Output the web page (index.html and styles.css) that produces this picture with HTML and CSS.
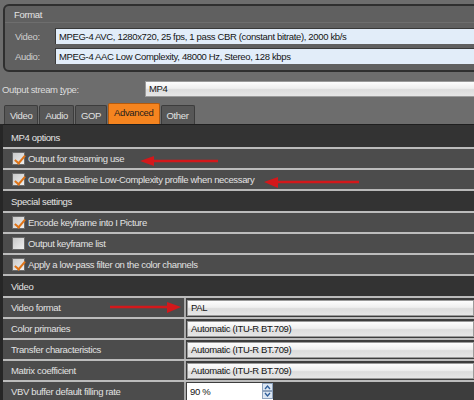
FILE: index.html
```html
<!DOCTYPE html>
<html lang="en">
<head>
    <meta charset="UTF-8">
    <title>MP4 output settings</title>
    <link rel="stylesheet" href="styles.css">
</head>
<body>
    <div class="format-box">
        <div class="box-title">Format</div>
        <div class="box-body">
            <div class="field-row">
                <span class="field-label">Video:</span>
                <div class="field info">MPEG-4 AVC, 1280x720, 25 fps, 1 pass CBR (constant bitrate), 2000 kb/s</div>
            </div>
            <div class="field-row">
                <span class="field-label">Audio:</span>
                <div class="field info">MPEG-4 AAC Low Complexity, 48000 Hz, Stereo, 128 kbps</div>
            </div>
        </div>
    </div>

    <div class="stream-row">
        <span class="stream-label">Output stream <u>t</u>ype:</span>
        <div class="field combo">MP4</div>
    </div>

    <div class="tabs">
        <div class="tab">Video</div>
        <div class="tab">Audio</div>
        <div class="tab">GOP</div>
        <div class="tab active">Advanced</div>
        <div class="tab">Other</div>
    </div>

    <div class="panel">
        <div class="sect first">MP4 options</div>
        <div class="row"><span class="check on"></span>Output for streaming use</div>
        <div class="row"><span class="check on"></span>Output a Baseline Low-Complexity profile when necessary</div>

        <div class="sect">Special settings</div>
        <div class="row"><span class="check on"></span>Encode keyframe into I Picture</div>
        <div class="row"><span class="check"></span>Output keyframe list</div>
        <div class="row"><span class="check on"></span>Apply a low-pass filter on the color channels</div>

        <div class="sect">Video</div>
        <div class="row split">
            <span class="prop">Video format</span>
            <div class="value"><div class="field combo">PAL</div></div>
        </div>
        <div class="row split">
            <span class="prop">Color primaries</span>
            <div class="value"><div class="field combo">Automatic (ITU-R BT.709)</div></div>
        </div>
        <div class="row split">
            <span class="prop">Transfer characteristics</span>
            <div class="value"><div class="field combo">Automatic (ITU-R BT.709)</div></div>
        </div>
        <div class="row split">
            <span class="prop">Matrix coefficient</span>
            <div class="value"><div class="field combo">Automatic (ITU-R BT.709)</div></div>
        </div>
        <div class="row split">
            <span class="prop">VBV buffer default filling rate</span>
            <div class="value">
                <div class="spin">
                    <span class="spin-text">90 %</span>
                    <span class="spin-btns">
                        <svg width="11" height="16" viewBox="0 0 11 16">
                            <rect x="0.5" y="0.5" width="10" height="7" fill="#dce6f2" stroke="#8da2bd"/>
                            <rect x="0.5" y="8.5" width="10" height="7" fill="#dce6f2" stroke="#8da2bd"/>
                            <path d="M3 6 L5.5 3 L8 6" fill="none" stroke="#2d5d9a" stroke-width="1.3"/>
                            <path d="M3 10 L5.5 13 L8 10" fill="none" stroke="#2d5d9a" stroke-width="1.3"/>
                        </svg>
                    </span>
                </div>
            </div>
        </div>
    </div>

    <!-- red annotation arrows drawn over the screenshot -->
    <svg class="arrows" width="474" height="400" viewBox="0 0 474 400">
        <g fill="#d3181b" stroke="#d3181b">
            <line x1="218" y1="161" x2="150" y2="161" stroke-width="2.5"/>
            <polygon points="140,161 154,156 154,166" stroke="none"/>
            <line x1="359" y1="182" x2="274" y2="182" stroke-width="2.5"/>
            <polygon points="264,182 278,177 278,188" stroke="none"/>
            <line x1="110" y1="307" x2="170" y2="307" stroke-width="2.5"/>
            <polygon points="181,307 167,302 167,313" stroke="none"/>
        </g>
    </svg>
</body>
</html>
```

FILE: styles.css
```css
body {
    margin: 0;
    width: 474px;
    height: 400px;
    overflow: hidden;
    position: relative;
    background-color: #6d6d6d;
    color: #dedede;
    font-family: "Liberation Sans", Arial, sans-serif;
    font-size: 9.5px;
    letter-spacing: -0.35px;
}

/* Format group box */
.format-box {
    margin: 4px -12px 0 3px;
    height: 64px;
    border: 2px solid #2f2f2f;
    border-radius: 6px;
    background-color: #606060;
}
.box-title {
    height: 16px;
    line-height: 18px;
    padding-left: 9px;
    border-bottom: 1px solid #6e6e6e;
    color: #e4e4e4;
}
.box-body {
    display: flex;
    flex-direction: column;
    gap: 4px;
    padding-top: 5px;
}
.field-row {
    display: flex;
    align-items: center;
}
.field-label {
    width: 40px;
    padding-left: 10px;
    color: #cfcfcf;
}
.field {
    flex: 1;
    height: 16px;
    line-height: 16px;
    padding-left: 3px;
    box-sizing: border-box;
    color: #141414;
    white-space: nowrap;
    overflow: hidden;
}
.field.info {
    background-color: #e2edf9;
    border-top: 1px solid #3a3a3a;
    border-left: 1px solid #3a3a3a;
}
.field.combo {
    background: linear-gradient(#fdfdfd, #efefef 45%, #dcdcdc 55%, #e6e6e6);
    border: 1px solid #9a9a9a;
    line-height: 14px;
}

/* Output stream type */
.stream-row {
    display: flex;
    align-items: center;
    margin-top: 9px;
}
.stream-label {
    width: 143px;
    padding-left: 2px;
    color: #dcdcdc;
}
.stream-row .field {
    margin-right: -10px;
}

/* tabs */
.tabs {
    display: flex;
    align-items: flex-end;
    gap: 1px;
    height: 20px;
    margin-top: 7px;
    padding-left: 4px;
}
.tab {
    height: 19px;
    line-height: 19px;
    padding: 0 5px;
    box-sizing: border-box;
    background-color: #575757;
    border: 1px solid #3c3c3c;
    border-bottom: none;
    border-radius: 2px 2px 0 0;
    color: #e2e2e2;
}
.tab.active {
    height: 21px;
    line-height: 18px;
    background-color: #f5841f;
    border-color: #b45a0c;
    color: #1d1d1d;
}

/* settings list */
.panel {
    border-left: 3px solid #262626;
    background-color: #2f2f2f;
}
.sect {
    height: 22px;
    line-height: 22px;
    padding-left: 8px;
    box-sizing: border-box;
    background-color: #333;
    border-top: 2px solid #b9b9b9;
    color: #e4e4e4;
}
.sect.first {
    height: 23px;
    line-height: 25px;
    border-top: 1px solid #1f1f1f;
}
.row {
    display: flex;
    align-items: center;
    height: 21px;
    box-sizing: border-box;
    border-top: 2px solid #bcbcbc;
    background-color: #4c4c4c;
    color: #e2e2e2;
}
.check {
    width: 13px;
    height: 13px;
    margin: 0 3px 0 9px;
    box-sizing: border-box;
    border: 1px solid #6c6c6c;
    background: linear-gradient(135deg, #c9c9c9, #efefef);
    position: relative;
}
.check.on::after {
    content: "";
    position: absolute;
    left: 4px;
    top: 0px;
    width: 4px;
    height: 9px;
    border: solid #de7317;
    border-width: 0 2px 2px 0;
    transform: rotate(40deg);
}

/* property grid */
.row.split {
    align-items: stretch;
}
.prop {
    width: 173px;
    padding-left: 8px;
    line-height: 19px;
    border-right: 2px solid #a9a9a9;
}
.value {
    flex: 1;
    display: flex;
    align-items: center;
    padding-left: 1px;
    background-color: #3d3d3d;
}
.spin {
    display: flex;
    width: 86px;
    height: 17px;
    background-color: #fff;
    color: #141414;
}
.spin-text {
    flex: 1;
    padding-left: 3px;
    line-height: 17px;
}
.spin-btns {
    display: flex;
}

.arrows {
    position: absolute;
    left: 0;
    top: 0;
    pointer-events: none;
}
```
